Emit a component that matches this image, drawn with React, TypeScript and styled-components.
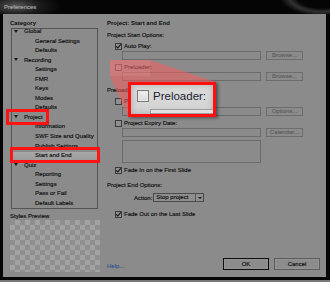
import React from 'react';
import styled, { createGlobalStyle } from 'styled-components';

const GlobalStyle = createGlobalStyle`
  html, body { margin: 0; padding: 0; background: #7a7a7a; }
  body { width: 330px; height: 282px; overflow: hidden; font-family: "Liberation Sans", Arial, sans-serif; }
  * { box-sizing: border-box; }
`;

const Window = styled.div`
  position: relative;
  width: 330px;
  height: 280px;
  background: #060606;
  display: flex;
  flex-direction: column;
  padding: 0 4px 3px 3px;
  font-size: 6px;
  color: #0e0e0e;
  -webkit-text-stroke: 0.15px currentColor;
`;

const TitleBar = styled.div`
  height: 14px;
  margin: 0 -4px 0 -3px;
  padding-left: 4px;
  display: flex;
  align-items: center;
  color: #a4a4a4;
  font-size: 6px;
  background:
    radial-gradient(ellipse 46px 16px at 16px 6px, rgba(100,100,100,0.85), rgba(50,50,50,0.45) 55%, rgba(0,0,0,0) 100%),
    radial-gradient(ellipse 46px 22px at 322px -4px, rgba(0,0,0,0) 55%, rgba(85,85,85,0.55) 72%, rgba(0,0,0,0) 92%),
    #050505;
`;

const Panel = styled.div`
  flex: 1;
  background: #8b8b8b;
  display: flex;
  min-height: 0;
`;

const LeftPane = styled.div`
  width: 102px;
  padding: 5px 0 0 7px;
  display: flex;
  flex-direction: column;
`;

const BoldLabel = styled.div`
  font-weight: bold;
  line-height: 8px;
  height: 8px;
  white-space: nowrap;
  -webkit-text-stroke: 0;
`;

const TreeBox = styled.div`
  margin: 1px 0 0 1px;
  width: 87px;
  height: 181px;
  border: 1px solid #545454;
  overflow: hidden;
`;

const TreeList = styled.div`
  margin-top: -1px;
  display: flex;
  flex-direction: column;
`;

const TreeRow = styled.div<{ $level: number; $selected?: boolean }>`
  height: 9.56px;
  flex: none;
  display: flex;
  align-items: flex-start;
  line-height: 6px;
  padding-left: ${(p) => (p.$level === 0 ? 2 : 23)}px;
  white-space: nowrap;
  background: ${(p) => (p.$selected ? 'linear-gradient(#a8a8a8, #9a9a9a)' : 'transparent')};
`;

const Arrow = styled.span`
  width: 0;
  height: 0;
  margin-top: 1.5px;
  margin-right: 6px;
  border-left: 2.5px solid transparent;
  border-right: 2.5px solid transparent;
  border-top: 3px solid #1a1a1a;
`;

const SmallLabel = styled.div<{ $mt?: number }>`
  line-height: 8px;
  height: 8px;
  margin-top: ${(p) => p.$mt ?? 0}px;
  white-space: nowrap;
`;

const Checker = styled.div`
  margin-top: 0.5px;
  width: 90px;
  height: 52px;
  background: repeating-conic-gradient(#a2a2a2 0 25%, #8f8f8f 0 50%) 0 0 / 10px 10px;
`;

const RightPane = styled.div`
  flex: 1;
  display: flex;
  flex-direction: column;
  padding: 5px 6px 7px 2px;
`;

const CheckRow = styled.div<{ $mt: number }>`
  display: flex;
  align-items: center;
  height: 8px;
  line-height: 8px;
  padding-left: 8px;
  gap: 2px;
  margin-top: ${(p) => p.$mt}px;
  white-space: nowrap;
`;

const Box = styled.span`
  position: relative;
  width: 7px;
  height: 7px;
  flex: none;
  border: 1px solid #3c3c3c;
  background: #909090;
  display: inline-flex;
  align-items: center;
  justify-content: center;
`;

const FieldRow = styled.div<{ $mt: number }>`
  display: flex;
  gap: 5px;
  padding-left: 15px;
  height: 9px;
  margin-top: ${(p) => p.$mt}px;
`;

const Field = styled.div<{ $h?: number }>`
  width: 139px;
  height: ${(p) => p.$h ?? 9}px;
  border: 1px solid #6b6b6b;
`;

const TextArea = styled(Field)`
  margin: 3px 0 0 15px;
`;

const SideButton = styled.div`
  width: 37px;
  height: 9px;
  border: 1px solid #6d6d6d;
  color: #5e5e5e;
  display: flex;
  align-items: center;
  justify-content: center;
  line-height: 7px;
`;

const ActionRow = styled.div`
  display: flex;
  align-items: center;
  padding-left: 27px;
  height: 9px;
  margin-top: 4px;
  gap: 1px;
`;

const Select = styled.div`
  width: 51px;
  height: 9px;
  border: 1px solid #4a4a4a;
  display: flex;
  align-items: stretch;
  background: #8e8e8e;
`;

const SelectText = styled.div`
  flex: 1;
  padding-left: 2px;
  line-height: 7px;
  white-space: nowrap;
`;

const SelectArrow = styled.div`
  width: 8px;
  border-left: 1px solid #5a5a5a;
  display: flex;
  align-items: center;
  justify-content: center;
  &::after {
    content: '';
    border-left: 2px solid transparent;
    border-right: 2px solid transparent;
    border-top: 2.5px solid #1a1a1a;
  }
`;

const Footer = styled.div`
  margin-top: auto;
  display: flex;
  align-items: center;
  height: 12px;
  gap: 5px;
`;

const HelpLink = styled.div`
  margin-right: auto;
  color: #34578c;
  line-height: 8px;
  margin-top: 4px;
`;

const DialogButton = styled.div<{ $default?: boolean }>`
  width: 46px;
  height: 12px;
  border: 1px solid ${(p) => (p.$default ? '#0e0e0e' : '#5c5c5c')};
  box-shadow: inset 0 0 0 1px rgba(255, 255, 255, 0.07);
  background: #8c8c8c;
  display: flex;
  align-items: center;
  justify-content: center;
  line-height: 8px;
`;

const RedFrame = styled.div<{ $x: number; $y: number; $w: number; $h: number }>`
  position: absolute;
  left: ${(p) => p.$x}px;
  top: ${(p) => p.$y}px;
  width: ${(p) => p.$w}px;
  height: ${(p) => p.$h}px;
  border: 3px solid #ff1414;
  pointer-events: none;
`;

const Beam = styled.svg`
  position: absolute;
  left: 0;
  top: 0;
  width: 330px;
  height: 282px;
  pointer-events: none;
`;

const Magnifier = styled.div`
  position: absolute;
  left: 128px;
  top: 82px;
  width: 88px;
  height: 35px;
  border: 3px solid #ff1010;
  background: linear-gradient(#dcdcdc, #d2d2d2);
  box-shadow: 2px 1px 3px rgba(0, 0, 0, 0.45), inset 0 0 6px rgba(0, 0, 0, 0.22);
  overflow: hidden;
  display: flex;
  flex-direction: column;
  padding: 5px 0 0 6px;
  -webkit-text-stroke: 0;
`;

const MagRow = styled.div`
  display: flex;
  align-items: center;
  gap: 4px;
  height: 12px;
`;

const MagBox = styled.span`
  width: 12px;
  height: 12px;
  flex: none;
  border: 1px solid #7c7c7c;
  background: linear-gradient(#f2f2f2, #d8d8d8);
  box-shadow: inset 0 0 0 1px #e8e8e8;
`;

const MagText = styled.span`
  font-size: 11.5px;
  line-height: 12px;
  color: #1d2232;
  white-space: nowrap;
`;

const MagField = styled.div`
  margin: 7px 0 0 13px;
  height: 12px;
  border: 1px solid #9c9c9c;
  border-right: none;
  background: #e0e0e0;
`;

const Check = () => (
  <svg width="7" height="7" viewBox="0 0 7 7" style={{ position: 'absolute', left: -1, top: -1 }}>
    <path d="M1.3 3.4 L2.8 5 L5.8 1.4" fill="none" stroke="#111" strokeWidth="1.1" />
  </svg>
);

const CheckBox = ({ checked }: { checked?: boolean }) => <Box>{checked && <Check />}</Box>;

const tree: { label: string; level: number; selected?: boolean }[] = [
  { label: 'Global', level: 0 },
  { label: 'General Settings', level: 1 },
  { label: 'Defaults', level: 1 },
  { label: 'Recording', level: 0 },
  { label: 'Settings', level: 1 },
  { label: 'FMR', level: 1 },
  { label: 'Keys', level: 1 },
  { label: 'Modes', level: 1 },
  { label: 'Defaults', level: 1 },
  { label: 'Project', level: 0 },
  { label: 'Information', level: 1 },
  { label: 'SWF Size and Quality', level: 1 },
  { label: 'Publish Settings', level: 1 },
  { label: 'Start and End', level: 1, selected: true },
  { label: 'Quiz', level: 0 },
  { label: 'Reporting', level: 1 },
  { label: 'Settings', level: 1 },
  { label: 'Pass or Fail', level: 1 },
  { label: 'Default Labels', level: 1 },
];

export default function App() {
  return (
    <>
      <GlobalStyle />
      <Window>
        <TitleBar>Preferences</TitleBar>
        <Panel>
          <LeftPane>
            <BoldLabel>Category</BoldLabel>
            <TreeBox>
              <TreeList>
                {tree.map((t, i) => (
                  <TreeRow key={i} $level={t.level} $selected={t.selected}>
                    {t.level === 0 && <Arrow />}
                    {t.label}
                  </TreeRow>
                ))}
              </TreeList>
            </TreeBox>
            <SmallLabel $mt={2.5}>Styles Preview</SmallLabel>
            <Checker />
          </LeftPane>
          <RightPane>
            <BoldLabel>Project: Start and End</BoldLabel>
            <SmallLabel $mt={4}>Project Start Options:</SmallLabel>
            <CheckRow $mt={3}>
              <CheckBox checked />
              Auto Play:
            </CheckRow>
            <FieldRow $mt={1}>
              <Field />
              <SideButton>Browse...</SideButton>
            </FieldRow>
            <CheckRow $mt={3}>
              <CheckBox />
              Preloader:
            </CheckRow>
            <FieldRow $mt={1}>
              <Field />
              <SideButton>Browse...</SideButton>
            </FieldRow>
            <SmallLabel $mt={5}>Preloader %:</SmallLabel>
            <CheckRow $mt={3}>
              <CheckBox />
              Password Protect Project
            </CheckRow>
            <FieldRow $mt={2}>
              <Field />
              <SideButton>Options...</SideButton>
            </FieldRow>
            <CheckRow $mt={3}>
              <CheckBox />
              Project Expiry Date:
            </CheckRow>
            <FieldRow $mt={1}>
              <Field />
              <SideButton>Calendar...</SideButton>
            </FieldRow>
            <TextArea $h={23} />
            <CheckRow $mt={3}>
              <CheckBox checked />
              Fade In on the First Slide
            </CheckRow>
            <SmallLabel $mt={7}>Project End Options:</SmallLabel>
            <ActionRow>
              Action:
              <Select>
                <SelectText>Stop project</SelectText>
                <SelectArrow />
              </Select>
            </ActionRow>
            <CheckRow $mt={8}>
              <CheckBox checked />
              Fade Out on the Last Slide
            </CheckRow>
            <Footer>
              <HelpLink>Help...</HelpLink>
              <DialogButton $default>OK</DialogButton>
              <DialogButton>Cancel</DialogButton>
            </Footer>
          </RightPane>
        </Panel>
        <RedFrame $x={6} $y={109} $w={43} $h={16} />
        <RedFrame $x={10} $y={147} $w={90} $h={16} />
        <Beam viewBox="0 0 330 282">
          <polygon points="110,60 150,60 216,82 128,117 110,76" fill="rgba(255,92,92,0.52)" />
          <rect x="110" y="60" width="40" height="16" fill="rgba(255,255,255,0.07)" />
        </Beam>
        <Magnifier>
          <MagRow>
            <MagBox />
            <MagText>Preloader:</MagText>
          </MagRow>
          <MagField />
        </Magnifier>
      </Window>
    </>
  );
}
